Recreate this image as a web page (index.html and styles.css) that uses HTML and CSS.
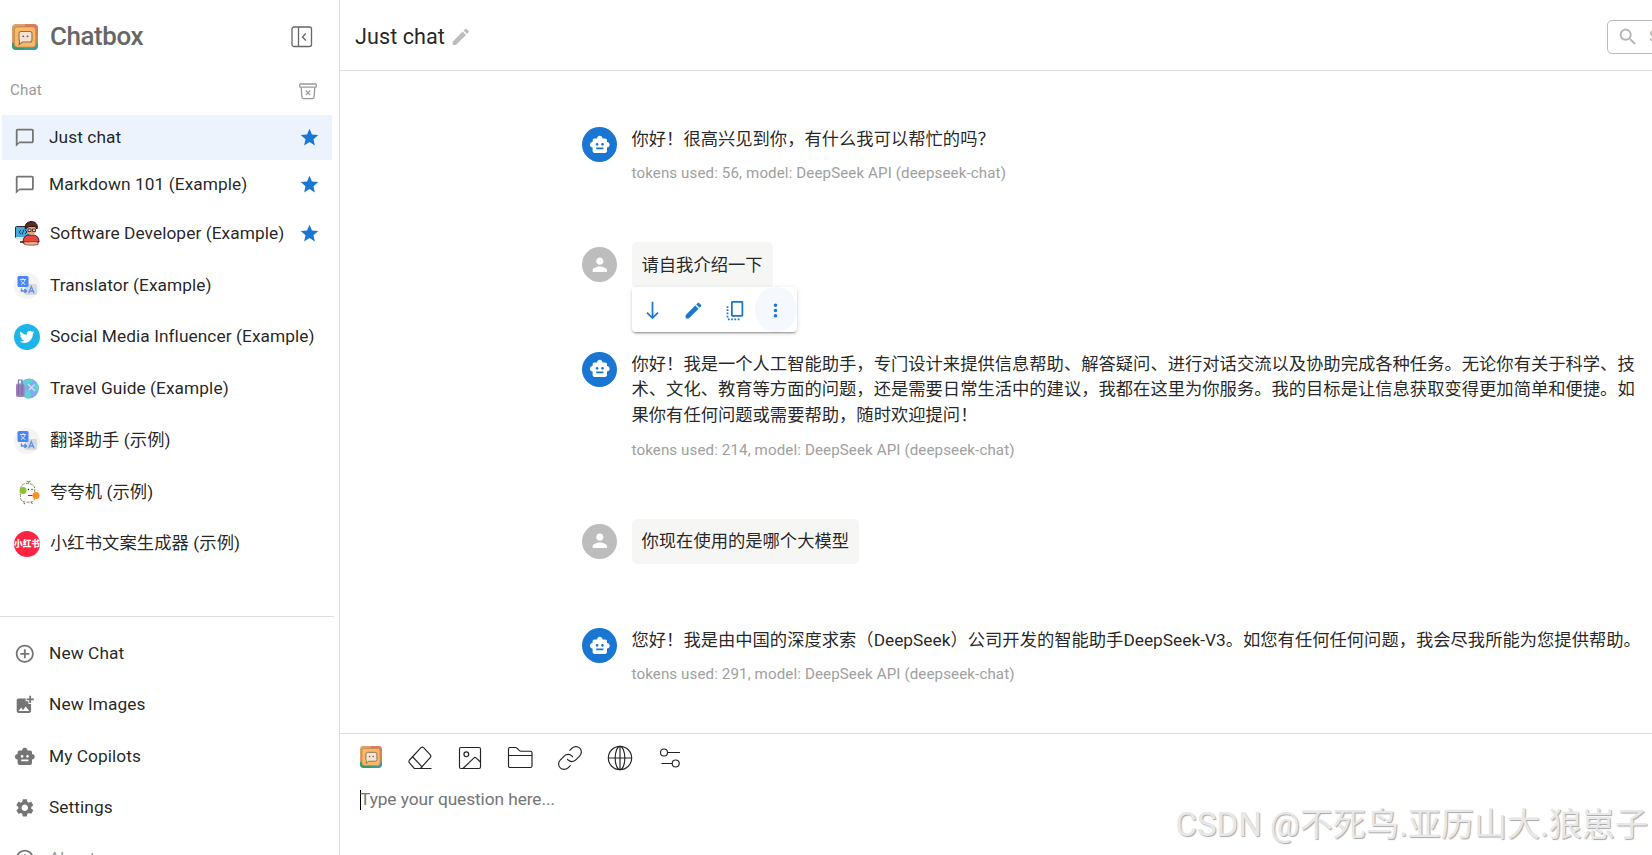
FILE: index.html
```html
<!DOCTYPE html>
<html lang="zh">
    <head>
        <meta charset="utf-8" />
        <title>Chatbox</title>
        <meta name="viewport" content="width=device-width, initial-scale=1.0" />
        <link rel="stylesheet" href="styles.css">
    </head>
    <body>
        <!-- shared icons -->
        <svg class="defs" width="0" height="0">
            <symbol id="logo" viewBox="0 0 26 26">
                <path d="M4 0h9v13H0V4a4 4 0 0 1 4-4z" fill="#d9a46c"/>
                <path d="M13 0h9a4 4 0 0 1 4 4v9H13z" fill="#e0795f"/>
                <path d="M0 17h13v9H4a4 4 0 0 1-4-4z" fill="#2f9e70"/>
                <path d="M13 17h13v5a4 4 0 0 1-4 4h-9z" fill="#3a98a8"/>
                <path d="M0 11h2.500v8H0z" fill="#d9a46c"/><path d="M23.500 11H26v8h-2.500z" fill="#c98a5c"/>
                <rect x="2.200" y="2.800" width="21.600" height="20.400" rx="3" fill="#fbb865" stroke="#b97f47" stroke-width=".9"/>
                <path d="M8.500 7.500h9.500a2 2 0 0 1 2 2V16a2 2 0 0 1-2 2H10.500l-3.300 2.600.4-3.600-.6-1V9.500a2 2 0 0 1 1.500-2z" fill="#f3e3d0" stroke="#86705b" stroke-width="1.100"/>
                <circle cx="11.300" cy="12.300" r=".9" fill="#6b5747"/><circle cx="15.500" cy="12.300" r=".9" fill="#6b5747"/>
            </symbol>
            <symbol id="bubble" viewBox="0 0 24 24"><path d="M20 2H4c-1.1 0-2 .9-2 2v18l4-4h14c1.1 0 2-.9 2-2V4c0-1.1-.9-2-2-2m0 14H6l-2 2V4h16z"/></symbol>
            <symbol id="star" viewBox="0 0 24 24"><path d="M12 17.27 18.18 21l-1.64-7.03L22 9.24l-7.19-.61L12 2 9.19 8.63 2 9.24l5.46 4.73L5.82 21z"/></symbol>
            <symbol id="robot" viewBox="0 0 24 24"><path d="M20 9V7c0-1.1-.9-2-2-2h-3c0-1.66-1.34-3-3-3S9 3.34 9 5H6c-1.1 0-2 .9-2 2v2c-1.66 0-3 1.34-3 3s1.34 3 3 3v4c0 1.1.9 2 2 2h12c1.1 0 2-.9 2-2v-4c1.66 0 3-1.34 3-3s-1.34-3-3-3M7.5 11.5c0-.83.67-1.5 1.5-1.5s1.5.67 1.5 1.5S9.83 13 9 13s-1.5-.67-1.5-1.5M16 17H8v-2h8zm-1-4c-.83 0-1.5-.67-1.5-1.5S14.17 10 15 10s1.5.67 1.5 1.5S15.83 13 15 13"/></symbol>
            <symbol id="person" viewBox="0 0 24 24"><path d="M12 12c2.21 0 4-1.79 4-4s-1.79-4-4-4-4 1.79-4 4 1.79 4 4 4m0 2c-2.67 0-8 1.34-8 4v2h16v-2c0-2.66-5.33-4-8-4"/></symbol>
            <symbol id="edit" viewBox="0 0 24 24"><path d="M3 17.46v3.04c0 .28.22.5.5.5h3.04c.13 0 .26-.05.35-.15L17.81 9.94l-3.75-3.75L3.15 17.1c-.1.1-.15.22-.15.36M20.71 7.04c.39-.39.39-1.02 0-1.41l-2.34-2.34a.9959.9959 0 0 0-1.41 0l-1.83 1.83 3.75 3.75z"/></symbol>
            <symbol id="translate" viewBox="0 0 26 26">
                <circle cx="13" cy="13" r="13" fill="#f4f4f5"/>
                <rect x="11" y="11" width="12" height="11" rx="1.5" fill="#d9dade"/>
                <rect x="3.500" y="3" width="11" height="11" rx="1.500" fill="#4a86f0"/>
                <path d="M6 6.500h6M9 5v1.500M7 11.500c2.500-1.200 3.500-2.700 4-5M7.200 7.500c.8 2 2 3.200 4.200 4" fill="none" stroke="#d5e3ff"/>
                <path d="M7.500 15.500v2.500h4.500M10.500 16l2 2-2 2" fill="none" stroke="#4a86f0" stroke-width="1.400"/>
                <path d="M14.700 20.300 17.300 13.500 20 20.300M15.600 18h3.500" fill="none" stroke="#5e92ef" stroke-width="1.300"/>
            </symbol>
        </svg>

        <div class="app">
            <div class="sidebar">
                <div class="brand">
                    <svg class="logo"><use href="#logo"/></svg>
                    <h1>Chatbox</h1>
                    <svg class="collapse" viewBox="0 0 22 22"><rect x="1" y="1" width="19.500" height="19.500" rx="2"/><path d="M7.500 1v19.500M14.800 7.500 11.500 11l3.300 3.500"/></svg>
                </div>
                <div class="section">
                    <span>Chat</span>
                    <svg class="archive" viewBox="0 0 18 17"><rect x=".7" y="1" width="16.600" height="3.200" rx="1"/><path d="M2.200 4.200l.7 9.800c.1 1 .7 1.600 1.700 1.600h8.800c1 0 1.600-.6 1.700-1.600l.7-9.800M6.800 7.500l4.400 4.600M11.200 7.500l-4.400 4.600"/></svg>
                </div>
                <ul class="sessions">
                    <li class="small active"><svg class="icon"><use href="#bubble"/></svg><span>Just chat</span><svg class="star"><use href="#star"/></svg></li>
                    <li class="small"><svg class="icon"><use href="#bubble"/></svg><span>Markdown 101 (Example)</span><svg class="star"><use href="#star"/></svg></li>
                    <li>
                        <svg class="pic" viewBox="0 0 26 26">
                            <rect x="1.500" y="5.500" width="15" height="11.500" rx="1" fill="#4aa8d8" stroke="#22303a"/>
                            <path d="M7 9 5 11l2 2M11 9l2 2-2 2M10 8.500 8 13.500" fill="none" stroke="#17415a"/>
                            <path d="M1.500 16h13v3H3z" fill="#dce9ee"/><path d="M6 21h7" stroke="#222" stroke-width="1.500"/>
                            <path d="M9 22c0-5 2-8 6-8h4c4 0 6 3 6 7z" fill="#e8473f" stroke="#3a1a18"/>
                            <ellipse cx="17.500" cy="8.500" rx="4.500" ry="5.500" fill="#e9a27a"/>
                            <path d="M11.500 8c-1.500-4 1.500-7 5.500-7.500 4-.3 7.500 3 6 7.500l-2-2.500h-6z" fill="#5a2b20" stroke="#2b1410"/>
                            <path d="M14 8h3v2.500h-3zM18.500 8h3v2.500h-3z" fill="#f7d3bd" stroke="#222" stroke-width=".8"/>
                            <path d="M10 20.500c4 1.500 8-1 14 .5v2.500c-5 1-10 1-14-.5z" fill="#f2b28b" stroke="#5a2b20" stroke-width=".7"/>
                        </svg>
                        <span>Software Developer (Example)</span><svg class="star"><use href="#star"/></svg>
                    </li>
                    <li><svg class="pic"><use href="#translate"/></svg><span>Translator (Example)</span></li>
                    <li>
                        <svg class="pic" viewBox="0 0 26 26">
                            <circle cx="13" cy="13" r="13" fill="#1db4ea"/>
                            <path transform="translate(5.500 5.500) scale(.62)" fill="#fff" d="M23.950 4.570a10 10 0 0 1-2.820.770 4.960 4.960 0 0 0 2.160-2.720c-.95.550-2 .960-3.120 1.180a4.920 4.920 0 0 0-8.380 4.480C7.690 8.090 4.070 6.130 1.640 3.160a4.920 4.920 0 0 0 1.520 6.570 4.900 4.900 0 0 1-2.230-.61v.06a4.920 4.920 0 0 0 3.950 4.830 5 5 0 0 1-2.210.08 4.940 4.940 0 0 0 4.600 3.420A9.870 9.870 0 0 1 0 19.540a13.990 13.990 0 0 0 7.550 2.210c9.050 0 14-7.500 14-13.980 0-.21 0-.42-.02-.63a9.940 9.940 0 0 0 2.420-2.570z"/>
                        </svg>
                        <span>Social Media Influencer (Example)</span>
                    </li>
                    <li>
                        <svg class="pic" viewBox="0 0 26 26">
                            <circle cx="15" cy="12.500" r="10" fill="#82a9ee"/>
                            <path d="M9 6c3-3.500 8-4 10-2.500L17 7l-4 1-2 4-4-1zM11 14l5 1 1 4-3 4-4-3zM22 6l3 5-2 5-3-3z" fill="#5cd6d2"/>
                            <path d="M14 8l7 7M20.500 8.500 15 14" stroke="#cfe0ff" stroke-width="1.500"/>
                            <path d="M4.500 8V4h3.500v4" fill="none" stroke="#6b7bc4" stroke-width="1.200"/>
                            <rect x="2" y="7.500" width="8.500" height="13.500" rx="2" fill="#9a7fb8"/>
                            <path d="M4.500 9v10M8 9v10" stroke="#7d68a3"/>
                        </svg>
                        <span>Travel Guide (Example)</span>
                    </li>
                    <li><svg class="pic"><use href="#translate"/></svg><span>翻译助手 (示例)</span></li>
                    <li>
                        <svg class="pic" viewBox="0 0 26 26">
                            <path d="M8 5c3-2 8-2 11 0 2 2 2 5 1.500 8 1 4 .5 7-2 8.500-3 1-8 1-10.500-.5-2-2-2-6-1-9-.5-3-.5-5 1-7z" fill="#fffdf9" stroke="#8a7464" stroke-width=".9" stroke-dasharray="3 1"/>
                            <path d="M14.500 3.500V1.500M12.500 1l2 1 2-1" stroke="#77a83e" fill="none" stroke-width="1.300"/>
                            <circle cx="9" cy="10.500" r="3.500" fill="#86c232"/><circle cx="22" cy="15.500" r="3.500" fill="#ff8f1f"/>
                            <path d="M14 15.500h4.500M9.500 23l1.500 1M17 22.500l1.500 1" stroke="#5e4636"/><circle cx="14.500" cy="9.500" r=".7"/><circle cx="18" cy="9.500" r=".7"/>
                        </svg>
                        <span>夸夸机 (示例)</span>
                    </li>
                    <li><b class="pic red">小红书</b><span>小红书文案生成器 (示例)</span></li>
                </ul>
                <ul class="menu">
                    <li><svg class="icon" viewBox="0 0 24 24"><path d="M13 7h-2v4H7v2h4v4h2v-4h4v-2h-4zm-1-5C6.480 2 2 6.480 2 12s4.480 10 10 10 10-4.480 10-10S17.520 2 12 2m0 18c-4.410 0-8-3.590-8-8s3.590-8 8-8 8 3.590 8 8-3.590 8-8 8"/></svg><span>New Chat</span></li>
                    <li><svg class="icon" viewBox="0 0 24 24"><path d="M19 7v2.990s-1.990.010-2 0V7h-3s.010-1.990 0-2h3V2h2v3h3v2zm-3 4V8h-3V5H5c-1.100 0-2 .9-2 2v12c0 1.100.9 2 2 2h12c1.100 0 2-.9 2-2v-8zM5 19l3-4 2 3 3-4 4 5z"/></svg><span>New Images</span></li>
                    <li><svg class="icon"><use href="#robot"/></svg><span>My Copilots</span></li>
                    <li><svg class="icon" viewBox="0 0 24 24"><path d="M19.14 12.94c.04-.3.06-.61.06-.94 0-.32-.02-.64-.07-.94l2.03-1.58c.18-.14.23-.41.12-.61l-1.92-3.32c-.12-.22-.37-.29-.59-.22l-2.39.96c-.5-.38-1.03-.7-1.62-.94l-.36-2.54c-.04-.24-.24-.41-.48-.41h-3.84c-.24 0-.43.17-.47.41l-.36 2.54c-.59.24-1.13.57-1.62.94l-2.39-.96c-.22-.08-.47 0-.59.22L2.74 8.87c-.12.21-.08.47.12.61l2.03 1.58c-.05.3-.09.63-.09.94s.02.64.07.94l-2.03 1.58c-.18.14-.23.41-.12.61l1.92 3.32c.12.22.37.29.59.22l2.39-.96c.5.38 1.03.7 1.62.94l.36 2.54c.05.24.24.41.48.41h3.84c.24 0 .44-.17.47-.41l.36-2.54c.59-.24 1.13-.56 1.62-.94l2.39.96c.22.08.47 0 .59-.22l1.92-3.32c.12-.22.07-.47-.12-.61zM12 15.600c-1.980 0-3.600-1.620-3.600-3.600s1.620-3.600 3.600-3.600 3.600 1.620 3.600 3.600-1.620 3.600-3.600 3.600"/></svg><span>Settings</span></li>
                    <li class="about"><svg class="icon" viewBox="0 0 24 24"><path d="M11 7h2v2h-2zm0 4h2v6h-2zm1-9C6.480 2 2 6.480 2 12s4.480 10 10 10 10-4.480 10-10S17.520 2 12 2m0 18c-4.410 0-8-3.590-8-8s3.590-8 8-8 8 3.590 8 8-3.590 8-8 8"/></svg><span>About</span></li>
                </ul>
            </div>

            <div class="main">
                <header>
                    <h2>Just chat</h2>
                    <svg class="pencil"><use href="#edit"/></svg>
                    <div class="search">
                        <svg viewBox="0 0 24 24"><path d="M15.500 14h-.79l-.28-.27C15.410 12.590 16 11.110 16 9.500 16 5.910 13.090 3 9.500 3S3 5.910 3 9.500 5.910 16 9.500 16c1.610 0 3.090-.59 4.230-1.570l.27.28v.79l5 4.990L20.490 19zm-6 0C7.010 14 5 11.990 5 9.500S7.010 5 9.500 5 14 7.010 14 9.500 11.990 14 9.500 14"/></svg>
                        <span>Search</span>
                    </div>
                </header>

                <div class="messages">
                    <div class="msg bot">
                        <div class="avatar"><svg><use href="#robot"/></svg></div>
                        <div class="body">
                            <p>你好！很高兴见到你，有什么我可以帮忙的吗？</p>
                            <small>tokens used: 56, model: DeepSeek API (deepseek-chat)</small>
                        </div>
                    </div>
                    <div class="msg user">
                        <div class="avatar"><svg><use href="#person"/></svg></div>
                        <div class="bubble">
                            <p>请自我介绍一下</p>
                            <div class="actions">
                                <button><svg viewBox="0 0 24 24"><path d="M11 2h2v16.200l4.600-4.600L19 15l-7 7-7-7 1.400-1.400 4.600 4.600z"/></svg></button>
                                <button><svg><use href="#edit"/></svg></button>
                                <button><svg viewBox="0 0 24 24"><path d="M8 2.500c0-.8.700-1.500 1.500-1.500h11c.8 0 1.500.7 1.500 1.500v15c0 .8-.7 1.500-1.500 1.500h-11c-.8 0-1.500-.7-1.500-1.500zM10 3v14h10V3zM3 7h2v2H3zm0 3.700h2v2H3zm0 3.700h2v2H3zM3 18h2v2H3zm1.500 3h2v2h-2zm3.700 0h2v2h-2zm3.700 0h2v2h-2zm3.700 0h2v2h-2z"/></svg></button>
                                <button class="hover"><svg viewBox="0 0 24 24"><path d="M12 8c1.100 0 2-.9 2-2s-.9-2-2-2-2 .9-2 2 .9 2 2 2m0 2c-1.100 0-2 .9-2 2s.9 2 2 2 2-.9 2-2-.9-2-2-2m0 6c-1.100 0-2 .9-2 2s.9 2 2 2 2-.9 2-2-.9-2-2-2"/></svg></button>
                            </div>
                        </div>
                    </div>
                    <div class="msg bot">
                        <div class="avatar"><svg><use href="#robot"/></svg></div>
                        <div class="body">
                            <p>你好！我是一个人工智能助手，专门设计来提供信息帮助、解答疑问、进行对话交流以及协助完成各种任务。无论你有关于科学、技术、文化、教育等方面的问题，还是需要日常生活中的建议，我都在这里为你服务。我的目标是让信息获取变得更加简单和便捷。如果你有任何问题或需要帮助，随时欢迎提问！</p>
                            <small>tokens used: 214, model: DeepSeek API (deepseek-chat)</small>
                        </div>
                    </div>
                    <div class="msg user">
                        <div class="avatar"><svg><use href="#person"/></svg></div>
                        <div class="bubble"><p>你现在使用的是哪个大模型</p></div>
                    </div>
                    <div class="msg bot">
                        <div class="avatar"><svg><use href="#robot"/></svg></div>
                        <div class="body">
                            <p>您好！我是由中国的深度求索（DeepSeek）公司开发的智能助手DeepSeek-V3。如您有任何任何问题，我会尽我所能为您提供帮助。</p>
                            <small>tokens used: 291, model: DeepSeek API (deepseek-chat)</small>
                        </div>
                    </div>
                </div>

                <div class="input">
                    <div class="tools">
                        <svg class="logo"><use href="#logo"/></svg>
                        <svg viewBox="0 0 26 26"><path d="M2.500 15 14 2.700c.8-.8 1.800-.8 2.600 0l6.700 7.200c.7.8.7 1.700 0 2.500L13.500 23.500H7.300l-4.800-5.500c-.7-.9-.7-2.100 0-3zM5.800 12l9.700 10.300M13 23.500h11.500"/></svg>
                        <svg viewBox="0 0 26 26"><rect x="2.500" y="2.500" width="21" height="21" rx="1.500"/><circle cx="9.300" cy="9.300" r="2.400"/><path d="M6 23.500 17 12.800c.6-.6 1.400-.6 2 0l4.500 4.200"/></svg>
                        <svg viewBox="0 0 26 26"><path d="M1.500 10.500h23.500M1.500 21V4c0-.9.600-1.500 1.500-1.500h5.500c.6 0 1 .2 1.400.6l2.600 2.500c.4.400.8.600 1.400.6H23.500c.9 0 1.500.6 1.500 1.500V21c0 .9-.6 1.500-1.500 1.500H3c-.9 0-1.500-.6-1.500-1.500z"/></svg>
                        <svg viewBox="0 0 26 26"><path d="M12.500 5.700 15 3.200a5.400 5.400 0 0 1 7.800 7.700l-4 4a5.400 5.400 0 0 1-7.800 0l-.7-1M13.500 20.300 11 22.800a5.400 5.400 0 0 1-7.800-7.700l4-4a5.400 5.400 0 0 1 7.800 0l.7 1"/></svg>
                        <svg viewBox="0 0 26 26"><circle cx="13" cy="13" r="11.700"/><ellipse cx="13" cy="13" rx="4.800" ry="11.700"/><path d="M1.300 13h23.400M13 1.300v23.400"/></svg>
                        <svg viewBox="0 0 26 26"><circle cx="7" cy="7.500" r="3.500"/><circle cx="18.700" cy="18.500" r="3.500"/><path d="M10.500 7.500H23M4.500 18.500h10.700"/></svg>
                    </div>
                    <div class="field"><i class="caret"></i>Type your question here...</div>
                </div>
            </div>
        </div>
        <div class="watermark">CSDN @不死鸟.亚历山大.狼崽子</div>
    </body>
</html>
```
FILE: styles.css
```css
* {
    margin: 0;
    padding: 0;
    box-sizing: border-box;
}
body {
    height: 855px;
    overflow: hidden;
    position: relative;
    background-color: #fff;
    color: rgba(0, 0, 0, 0.87);
    font-family: Roboto, "Noto Sans CJK SC", sans-serif;
    font-size: 17.31px;
    line-height: 25.8px;
}
ul {
    list-style: none;
}
svg {
    flex: none;
    fill: currentColor;
}
.defs {
    position: absolute;
}
.app {
    display: flex;
    height: 855px;
    overflow: hidden;
}

/* sidebar */
.sidebar {
    width: 340px;
    flex: none;
    display: flex;
    flex-direction: column;
    border-right: 1px solid #dedede;
}
.brand {
    display: flex;
    align-items: center;
    flex: none;
    height: 74px;
    padding: 0 26px 0 12px;
    color: #666;
}
.brand .logo {
    width: 26px;
    height: 26px;
}
.brand h1 {
    flex: 1;
    padding-left: 12px;
    font-size: 25.9px;
    font-weight: 500;
    letter-spacing: -0.4px;
}
.collapse {
    width: 22px;
    height: 22px;
}
.collapse, .archive {
    fill: none;
    stroke: currentColor;
    stroke-width: 1.3;
}
.section {
    display: flex;
    align-items: center;
    justify-content: space-between;
    flex: none;
    height: 34px;
    padding: 0 22px 0 10px;
    font-size: 15.1px;
    letter-spacing: 0.15px;
    color: #999;
}
.archive {
    width: 18px;
    height: 17px;
}
.sessions {
    flex: none;
    height: 508px;
    padding: 7px 7px 0 2px;
}
.sessions li, .menu li {
    display: flex;
    align-items: center;
    height: 49.75px;
    margin-bottom: 2px;
    letter-spacing: 0.07px;
    white-space: nowrap;
}
.sessions li {
    padding: 0 12px 0 12px;
}
.sessions li.small {
    height: 45px;
}
.sessions li.active {
    background-color: #ecf3fc;
}
.sessions li span, .menu li span {
    flex: 1;
}
.icon {
    width: 21.6px;
    height: 21.6px;
    margin-right: 13.4px;
    color: #757575;
}
.pic {
    width: 26px;
    height: 26px;
    margin-right: 10px;
}
.star {
    width: 21px;
    height: 21px;
    color: #1976d2;
}
.red {
    flex: none;
    border-radius: 50%;
    background-color: #ff2442;
    color: #fff;
    font-size: 8.6px;
    font-weight: 900;
    line-height: 26px;
    letter-spacing: 0;
    text-align: center;
}
.menu {
    flex: none;
    width: 334px;
    padding: 12px 7px 0 14px;
    border-top: 1px solid #dedede;
}
.menu li {
    height: 49.4px;
}
.menu .about span {
    color: #999;
}

/* chat */
.main {
    width: 1312px;
    flex: none;
    display: flex;
    flex-direction: column;
}
header {
    display: flex;
    align-items: center;
    flex: none;
    height: 71px;
    padding: 3px 0 0 15px;
    overflow: hidden;
    border-bottom: 1px solid #dedede;
}
header h2 {
    font-size: 21.6px;
    font-weight: 400;
    letter-spacing: 0.06px;
}
.pencil {
    width: 21.6px;
    height: 21.6px;
    margin-left: 5px;
    color: #bdbdbd;
}
.search {
    display: flex;
    align-items: center;
    flex: none;
    width: 160px;
    height: 34px;
    margin: 0 -115px 0 auto;
    padding-left: 9px;
    border: 1px solid #bbb;
    border-radius: 5px;
    color: #b5b5b5;
}
.search svg {
    width: 22px;
    height: 22px;
    margin-right: 10px;
}
.messages {
    flex: none;
    height: 662px;
    padding: 56px 0 0 242px;
}
.msg {
    display: flex;
    gap: 14.5px;
}
.bot {
    margin-bottom: 58.2px;
}
.user {
    margin-bottom: 63.7px;
}
.avatar {
    flex: none;
    display: flex;
    align-items: center;
    justify-content: center;
    width: 35px;
    height: 35px;
    border-radius: 50%;
    background-color: #1976d2;
    color: #fff;
}
.avatar svg {
    width: 21.6px;
    height: 21.6px;
}
.user .avatar {
    margin-top: 5px;
    background-color: #bdbdbd;
}
.body {
    width: 1012px;
}
.body small {
    display: block;
    margin-top: 9.5px;
    font-size: 15.1px;
    line-height: 22px;
    letter-spacing: 0.12px;
    color: #a0a0a0;
}
.bubble {
    position: relative;
    height: 45.5px;
    padding: 10.3px 10px 9px;
    border-radius: 5px;
    background-color: #f6f6f5;
    white-space: nowrap;
}
.actions {
    position: absolute;
    top: 45px;
    left: 0;
    display: flex;
    width: 165px;
    height: 44.5px;
    border-radius: 4px;
    background-color: #fff;
    box-shadow: 0 3px 1px -2px rgba(0,0,0,.2), 0 2px 2px rgba(0,0,0,.14), 0 1px 5px rgba(0,0,0,.12);
}
.actions button {
    flex: 1;
    display: flex;
    align-items: center;
    justify-content: center;
    border: 0;
    border-radius: 50%;
    padding-top: 1px;
    background-color: transparent;
    color: #1976d2;
}
.actions button.hover {
    background-color: #f5f9fe;
}
.actions svg {
    width: 21px;
    height: 21px;
}

/* input area */
.input {
    flex: 1;
    padding: 11px 0 0 20px;
    border-top: 1px solid #dedede;
}
.tools {
    display: flex;
    align-items: center;
    gap: 24px;
    height: 26px;
}
.tools svg {
    width: 26px;
    height: 26px;
    fill: none;
    stroke: #222;
    stroke-width: 1.15;
}
.tools .logo {
    width: 22px;
    height: 22px;
    margin: 0 1px 2px 0;
    stroke: none;
}
.field {
    display: flex;
    align-items: center;
    height: 26px;
    margin-top: 16px;
    letter-spacing: -0.08px;
    color: #757575;
}
.caret {
    width: 1px;
    height: 20px;
    margin-right: -1px;
    background-color: #000;
}
.watermark {
    position: absolute;
    right: 4px;
    bottom: 6px;
    font-size: 33.1px;
    line-height: 48px;
    color: #e8e8e8;
    text-shadow: 1px 1px 1px #a8a8a8;
    white-space: nowrap;
}
```
